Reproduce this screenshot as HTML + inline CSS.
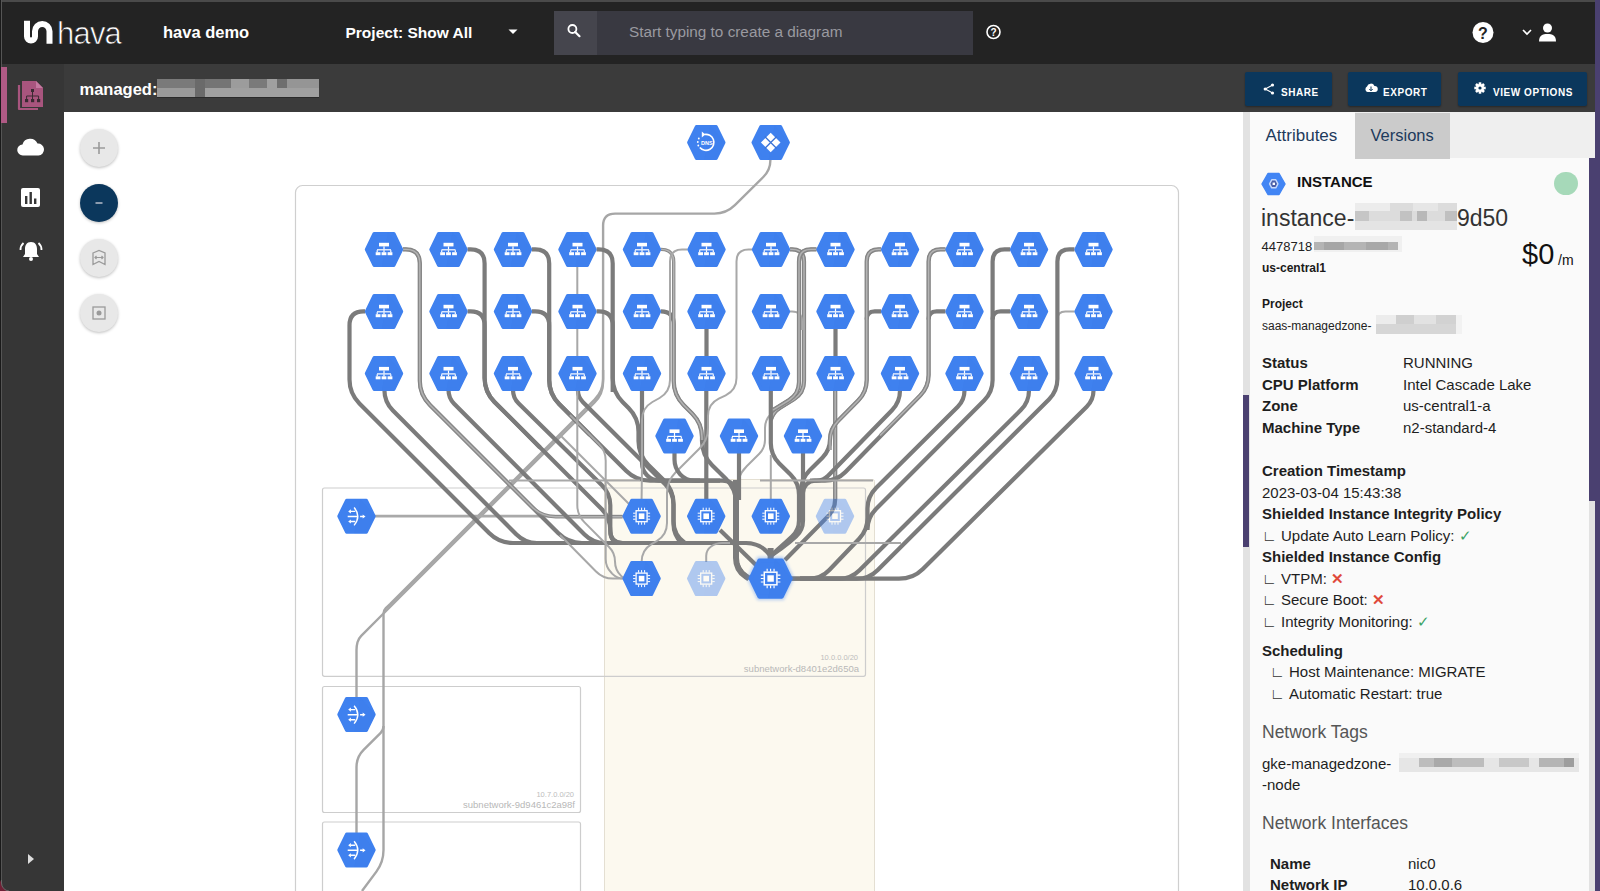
<!DOCTYPE html>
<html><head><meta charset="utf-8">
<style>
*{margin:0;padding:0;box-sizing:border-box}
html,body{width:1600px;height:891px;overflow:hidden;background:#fff;font-family:"Liberation Sans",sans-serif}
.abs{position:absolute}
#hdr{left:0;top:0;width:1600px;height:64px;background:#232323}
#topline{left:0;top:0;width:1600px;height:1.5px;background:#4a4a4a}
#side{left:0;top:64px;width:64px;height:827px;background:#363636}
#sub{left:64px;top:64px;width:1536px;height:48px;background:#3b3b3b}
#canvas{left:64px;top:112px;width:1179px;height:779px;background:#fff}
#panel{left:1250px;top:112px;width:339px;height:779px;background:#fafafa}
.t{position:absolute;white-space:nowrap;line-height:1}
.btn{position:absolute;top:72px;height:34px;background:#0b375c;border-radius:2px;box-shadow:0 1px 2px rgba(0,0,0,.35)}
.btn span{position:absolute;top:15.5px;font-size:10px;font-weight:bold;color:#fff;letter-spacing:0.55px;line-height:1}
.zc{position:absolute;left:80px;width:38px;height:38px;border-radius:50%;background:#e8e8e8;box-shadow:0 1px 3px rgba(0,0,0,.25)}
.pk b{font-weight:bold}
.row{position:absolute;left:1262px;font-size:15px;color:#1e1e1e;line-height:1;white-space:nowrap}
.row b{font-weight:bold}
.val{position:absolute;left:1403px}
</style></head><body>
<div id="hdr" class="abs"></div>
<div id="topline" class="abs"></div>
<div id="side" class="abs"></div>
<div id="sub" class="abs"></div>
<div id="canvas" class="abs"></div>
<div id="panel" class="abs"></div>




<!-- DIAGRAM START -->
<svg class="abs" style="left:0;top:0" width="1243" height="891" viewBox="0 0 1243 891">
<defs><filter id="blur" x="-50%" y="-50%" width="200%" height="200%"><feGaussianBlur stdDeviation="1.5"/></filter></defs>
<rect x="295.5" y="185.5" width="883" height="800" rx="7" fill="none" stroke="#cfcfcf" stroke-width="1.2"/>
<rect x="604.5" y="479.5" width="270" height="500" rx="2" fill="#fcf9ef" stroke="#e4dfd2" stroke-width="1"/>
<rect x="322.5" y="488" width="543" height="188.3" rx="2" fill="none" stroke="#cdcdcd" stroke-width="1.2"/>
<rect x="322.5" y="686.5" width="258" height="126" rx="2" fill="none" stroke="#cdcdcd" stroke-width="1.2"/>
<rect x="322.5" y="822" width="258" height="200" rx="2" fill="none" stroke="#cdcdcd" stroke-width="1.2"/>
<text x="858" y="660" font-size="7.5" fill="#bdbdbd" text-anchor="end" font-family="Liberation Sans">10.0.0.0/20</text>
<text x="859" y="671.5" font-size="9.5" fill="#b8b8b8" text-anchor="end" font-family="Liberation Sans">subnetwork-d8401e2d650a</text>
<text x="574" y="797" font-size="7.5" fill="#bdbdbd" text-anchor="end" font-family="Liberation Sans">10.7.0.0/20</text>
<text x="575" y="808" font-size="9.5" fill="#b8b8b8" text-anchor="end" font-family="Liberation Sans">subnetwork-9d9461c2a98f</text>
<path d="M770.4,160.0 L770.4,160.0 Q770.4,170.0 763.3,177.0 L734.9,205.2 Q726.4,213.6 714.4,213.6 L615.1,213.6 Q603.1,213.6 603.1,225.6 L603.1,379.0 Q603.1,391.0 594.6,399.5 L390.3,603.8 Q388.0,606.0 385.8,608.2 L385.8,608.2 Q383.5,610.5 383.5,613.7 L383.5,850.0 Q383.5,862.0 376.4,871.6 L362.0,891.0" fill="none" stroke="#a6a6a6" stroke-width="2.4"/>
<path d="M603.1,370.0 L603.1,382.0 Q603.1,394.0 594.6,402.5 L398.5,598.5 Q390.0,607.0 381.5,615.5 L361.2,635.8 Q358.5,638.5 357.5,642.2 L357.5,642.2 Q356.5,646.0 356.5,649.9 L356.5,697.0" fill="none" stroke="#a6a6a6" stroke-width="2.4"/>
<path d="M383.5,726.0 L383.5,726.0 Q383.5,730.0 380.7,732.8 L363.6,749.9 Q356.5,757.0 356.5,767.0 L356.5,833.0" fill="none" stroke="#a6a6a6" stroke-width="2.4"/>
<path d="M375.0,516.2 L622.6,516.2" fill="none" stroke="#a9a9a9" stroke-width="2.8"/>
<path d="M365.0,311.4 L363.5,311.4 Q349.5,311.4 349.5,325.4 L349.5,379.5 Q349.5,393.5 359.4,403.4 L489.1,533.1 Q499.0,543.0 513.0,543.0 L746.0,543.0 Q760.0,543.0 768.8,553.9 L770.6,556.0" fill="none" stroke="#7b7b7b" stroke-width="4.2"/>
<path d="M384.4,390.0 L384.4,390.0 Q384.4,402.0 392.9,410.5 L516.5,534.5 Q525.0,543.0 537.0,543.0 L600.0,543.0" fill="none" stroke="#7b7b7b" stroke-width="4.2"/>
<path d="M403.0,249.4 L405.8,249.4 Q419.8,249.4 419.8,263.4 L419.8,380.8 Q419.8,394.8 429.7,404.7 L558.1,533.1 Q568.0,543.0 582.0,543.0 L640.0,543.0" fill="none" stroke="#7b7b7b" stroke-width="4.2"/>
<path d="M403.0,249.4 L405.8,249.4 Q419.8,249.4 419.8,263.4 L419.8,380.8 Q419.8,394.8 429.7,404.7 L531.8,506.8 Q541.7,516.7 555.7,516.7 L622.6,516.7" fill="none" stroke="#8a8a8a" stroke-width="3.4"/><path d="M403.0,249.4 L405.8,249.4 Q419.8,249.4 419.8,263.4 L419.8,380.8 Q419.8,394.8 429.7,404.7 L531.8,506.8 Q541.7,516.7 555.7,516.7 L622.6,516.7" fill="none" stroke="#b4b4b4" stroke-width="1.4"/>
<path d="M560.0,535.0 L596.0,571.5 Q603.0,578.6 613.0,578.6 L622.6,578.6" fill="none" stroke="#a8a8a8" stroke-width="2"/>
<path d="M448.5,390.0 L448.5,390.0 Q448.5,398.0 454.1,403.7 L584.5,534.5 Q593.0,543.0 605.0,543.0 L660.0,543.0" fill="none" stroke="#7b7b7b" stroke-width="4.2"/>
<path d="M467.5,311.4 L470.6,311.4 Q484.6,311.4 484.6,325.4 L484.6,378.0 Q484.6,392.0 494.5,401.9 L601.4,508.8 Q610.3,517.7 610.3,530.4 L610.3,530.4 Q610.3,543.0 622.9,543.0 L680.0,543.0" fill="none" stroke="#7b7b7b" stroke-width="4.2"/>
<path d="M467.5,249.4 L470.6,249.4 Q484.6,249.4 484.6,263.4 L484.6,378.0 Q484.6,392.0 494.5,401.9 L540.0,447.4" fill="none" stroke="#7b7b7b" stroke-width="4.2"/>
<path d="M513.0,390.0 L513.0,390.0 Q513.0,398.0 518.7,403.6 L601.7,484.9 Q610.3,493.3 610.3,505.3 L610.3,531.0 Q610.3,543.0 622.3,543.0 L680.0,543.0" fill="none" stroke="#7b7b7b" stroke-width="4.2"/>
<path d="M532.0,311.4 L535.2,311.4 Q549.2,311.4 549.2,325.4 L549.2,380.0 Q549.2,394.0 559.1,403.9 L626.1,470.7 Q636.0,480.6 650.0,480.6 L722.0,480.6 Q736.0,480.6 736.0,494.6 L736.0,556.0 Q736.0,570.0 747.7,577.7 L749.0,578.5" fill="none" stroke="#7b7b7b" stroke-width="4.2"/>
<path d="M532.0,249.4 L535.2,249.4 Q549.2,249.4 549.2,263.4 L549.2,380.0 Q549.2,394.0 559.1,403.9 L590.0,435.0" fill="none" stroke="#7b7b7b" stroke-width="4.2"/>
<path d="M577.9,390.0 L577.9,390.0 Q577.9,397.0 582.8,401.9 L665.0,484.1 Q673.5,492.6 673.5,504.6 L673.5,523.7 Q673.5,535.0 681.5,543.0 L681.5,543.0" fill="none" stroke="#7b7b7b" stroke-width="4.2"/>
<path d="M596.5,311.4 L598.7,311.4 Q612.7,311.4 612.7,325.4 L612.7,378.0 Q612.7,392.0 622.6,401.9 L628.6,407.9 Q638.5,417.8 638.5,431.8 L638.5,441.0 Q638.5,455.0 648.4,464.9 L663.6,480.1 Q673.5,490.0 673.5,504.0 L673.5,521.0 Q673.5,535.0 685.0,543.0 L685.0,543.0" fill="none" stroke="#7b7b7b" stroke-width="4.2"/>
<path d="M596.5,249.4 L598.7,249.4 Q612.7,249.4 612.7,263.4 L612.7,392.0" fill="none" stroke="#7b7b7b" stroke-width="4.2"/>
<path d="M577.3,266.0 L577.3,505.0 Q577.3,515.0 584.3,522.1 L609.0,547.0 Q615.0,553.0 615.0,561.5 L615.0,561.5 Q615.0,570.0 621.1,575.9 L624.0,578.6" fill="none" stroke="#a8a8a8" stroke-width="2"/>
<path d="M570.0,415.0 L598.6,443.6 Q605.7,450.7 605.7,460.7 L605.7,558.9 Q605.7,567.0 611.4,572.8 L612.1,573.6 Q617.0,578.6 624.0,578.6 L624.0,578.6" fill="none" stroke="#a8a8a8" stroke-width="2"/>
<path d="M560.0,435.0 L631.0,506.0" fill="none" stroke="#a8a8a8" stroke-width="2"/>
<path d="M773.0,412.0 L770.7,414.3 Q765.0,420.0 765.0,428.0 L765.0,440.0 Q765.0,448.0 759.3,453.7 L746.7,466.3 Q741.0,472.0 738.2,479.5 L738.0,480.0" fill="none" stroke="#a8a8a8" stroke-width="2"/>
<path d="M642.0,390.0 L642.0,462.7 Q642.0,470.0 647.0,475.3 L647.0,475.3 Q652.0,480.6 659.3,480.6 L700.0,480.6" fill="none" stroke="#7b7b7b" stroke-width="4.2"/>
<path d="M661.0,311.4 L661.0,311.4 Q673.7,311.4 673.7,324.1 L673.7,381.0 Q673.7,395.0 683.6,404.9 L692.1,413.4 Q702.0,423.3 702.0,437.3 L702.0,441.0 Q702.0,455.0 711.9,464.9 L726.1,479.1 Q736.0,489.0 736.0,503.0 L736.0,556.0 Q736.0,570.0 747.7,577.7 L749.0,578.5" fill="none" stroke="#7b7b7b" stroke-width="4.2"/>
<path d="M661.0,249.4 L661.0,249.4 Q673.7,249.4 673.7,262.1 L673.7,381.0 Q673.7,395.0 683.6,404.9 L692.1,413.4 Q702.0,423.3 702.0,437.3 L702.0,440.0" fill="none" stroke="#8a8a8a" stroke-width="3.4"/><path d="M661.0,249.4 L661.0,249.4 Q673.7,249.4 673.7,262.1 L673.7,381.0 Q673.7,395.0 683.6,404.9 L692.1,413.4 Q702.0,423.3 702.0,437.3 L702.0,440.0" fill="none" stroke="#b4b4b4" stroke-width="1.4"/>
<path d="M687.5,249.4 L682.0,249.4 Q670.0,249.4 670.0,261.4 L670.0,380.0 Q670.0,392.0 659.6,398.0 L652.4,402.0 Q642.0,408.0 642.0,420.0 L642.0,458.0 Q642.0,470.0 641.8,482.0 L641.6,499.0" fill="none" stroke="#a8a8a8" stroke-width="2"/>
<path d="M706.5,328.4 L706.5,356.5" fill="none" stroke="#7b7b7b" stroke-width="4.2"/>
<path d="M706.3,390.5 L706.3,499.0" fill="none" stroke="#7b7b7b" stroke-width="4.2"/>
<path d="M752.0,249.4 L748.5,249.4 Q736.5,249.4 736.5,261.4 L736.5,378.0 Q736.5,390.0 725.7,395.3 L718.8,398.7 Q708.0,404.0 708.0,416.0 L708.0,428.0 Q708.0,440.0 699.5,448.5 L675.5,472.5 Q667.0,481.0 667.0,493.0 L667.0,523.0 Q667.0,535.0 656.7,541.1 L651.9,543.9 Q641.6,550.0 641.6,562.0 L641.6,562.0" fill="none" stroke="#a8a8a8" stroke-width="2"/>
<path d="M790.0,249.4 L792.0,249.4 Q804.0,249.4 804.0,261.4 L804.0,381.0 Q804.0,393.0 793.8,399.3 L780.1,407.7 Q773.0,412.0 770.8,420.0 L770.8,420.0" fill="none" stroke="#7b7b7b" stroke-width="4.2"/>
<path d="M790.0,249.4 L792.0,249.4 Q804.0,249.4 804.0,261.4 L804.0,381.0 Q804.0,393.0 793.8,399.3 L780.1,407.7 Q773.0,412.0 770.8,420.0 L770.8,420.0" fill="none" stroke="#8a8a8a" stroke-width="3.4"/><path d="M790.0,249.4 L792.0,249.4 Q804.0,249.4 804.0,261.4 L804.0,381.0 Q804.0,393.0 793.8,399.3 L780.1,407.7 Q773.0,412.0 770.8,420.0 L770.8,420.0" fill="none" stroke="#b4b4b4" stroke-width="1.4"/>
<path d="M790.0,311.4 L792.0,311.4 Q802.0,311.4 802.0,321.4 L802.0,330.0" fill="none" stroke="#a8a8a8" stroke-width="2"/>
<path d="M770.8,390.5 L770.8,443.0 Q770.8,455.0 779.3,463.5 L790.5,474.5 Q799.0,483.0 799.0,495.0 L799.0,520.4 Q799.0,530.0 792.0,536.5 L792.0,536.5 Q785.0,543.0 777.9,549.4 L770.6,556.0" fill="none" stroke="#7b7b7b" stroke-width="4.2"/>
<path d="M770.8,455.0 L770.8,499.0" fill="none" stroke="#a8a8a8" stroke-width="2"/>
<path d="M816.5,249.4 L811.0,249.4 Q799.0,249.4 799.0,261.4 L799.0,382.0 Q799.0,394.0 788.8,400.3 L773.0,410.0" fill="none" stroke="#7b7b7b" stroke-width="4.2"/>
<path d="M816.5,249.4 L811.0,249.4 Q799.0,249.4 799.0,261.4 L799.0,382.0 Q799.0,394.0 788.8,400.3 L773.0,410.0" fill="none" stroke="#8a8a8a" stroke-width="3.4"/><path d="M816.5,249.4 L811.0,249.4 Q799.0,249.4 799.0,261.4 L799.0,382.0 Q799.0,394.0 788.8,400.3 L773.0,410.0" fill="none" stroke="#b4b4b4" stroke-width="1.4"/>
<path d="M835.5,328.4 L835.5,356.5" fill="none" stroke="#7b7b7b" stroke-width="4.2"/>
<path d="M835.2,390.5 L835.2,499.0 Q835.2,509.0 828.2,516.1 L785.0,560.0" fill="none" stroke="#7b7b7b" stroke-width="4.2"/>
<path d="M835.2,390.5 L835.2,499.0" fill="none" stroke="#8a8a8a" stroke-width="3.4"/><path d="M835.2,390.5 L835.2,499.0" fill="none" stroke="#b4b4b4" stroke-width="1.4"/>
<path d="M881.0,311.4 L874.7,311.4 Q866.7,311.4 866.7,319.4 L866.7,319.4" fill="none" stroke="#7b7b7b" stroke-width="4.2"/>
<path d="M881.0,249.4 L878.7,249.4 Q866.7,249.4 866.7,261.4 L866.7,380.0 Q866.7,392.0 858.2,400.5 L837.4,421.5 Q830.0,429.0 830.0,439.5 L830.0,439.5 Q830.0,450.0 822.6,457.4 L809.5,470.5 Q801.0,479.0 801.0,491.0 L801.0,520.0" fill="none" stroke="#7b7b7b" stroke-width="4.2"/>
<path d="M881.0,249.4 L878.7,249.4 Q866.7,249.4 866.7,261.4 L866.7,380.0 Q866.7,392.0 858.2,400.5 L838.5,420.5 Q830.0,429.0 830.0,441.0 L830.0,450.0" fill="none" stroke="#8a8a8a" stroke-width="3.4"/><path d="M881.0,249.4 L878.7,249.4 Q866.7,249.4 866.7,261.4 L866.7,380.0 Q866.7,392.0 858.2,400.5 L838.5,420.5 Q830.0,429.0 830.0,441.0 L830.0,450.0" fill="none" stroke="#b4b4b4" stroke-width="1.4"/>
<path d="M900.0,390.5 L900.0,390.5 Q900.0,402.0 892.0,410.2 L828.1,475.8 Q823.4,480.6 816.7,480.6 L815.1,480.6 Q810.0,480.6 806.5,484.3 L806.5,484.3 Q803.0,488.0 803.0,493.1 L803.0,520.4 Q803.0,530.0 796.0,536.5 L796.0,536.5 Q789.0,543.0 781.2,548.5 L770.6,556.0" fill="none" stroke="#7b7b7b" stroke-width="4.2"/>
<path d="M803.0,453.0 L803.0,500.0" fill="none" stroke="#7b7b7b" stroke-width="4.2"/>
<path d="M739.0,453.0 L739.0,500.0" fill="none" stroke="#7b7b7b" stroke-width="4.2"/>
<path d="M674.5,453.0 L674.5,459.5 Q674.5,468.0 680.2,474.3 L680.2,474.3 Q686.0,480.6 694.5,480.6 L720.0,480.6" fill="none" stroke="#7b7b7b" stroke-width="4.2"/>
<path d="M945.5,311.4 L936.6,311.4 Q928.6,311.4 928.6,319.4 L928.6,319.4" fill="none" stroke="#7b7b7b" stroke-width="4.2"/>
<path d="M945.5,249.4 L940.6,249.4 Q928.6,249.4 928.6,261.4 L928.6,375.0 Q928.6,387.0 920.2,395.6 L845.4,472.0 Q837.0,480.6 825.0,480.6 L810.0,480.6" fill="none" stroke="#7b7b7b" stroke-width="4.2"/>
<path d="M945.5,249.4 L940.6,249.4 Q928.6,249.4 928.6,261.4 L928.6,375.0 Q928.6,387.0 920.1,395.5 L880.0,435.6" fill="none" stroke="#8a8a8a" stroke-width="3.4"/><path d="M945.5,249.4 L940.6,249.4 Q928.6,249.4 928.6,261.4 L928.6,375.0 Q928.6,387.0 920.1,395.5 L880.0,435.6" fill="none" stroke="#b4b4b4" stroke-width="1.4"/>
<path d="M964.5,390.5 L964.5,390.5 Q964.5,400.0 957.8,406.7 L876.0,488.0 Q867.5,496.5 867.5,508.5 L867.5,518.0 Q867.5,530.0 859.2,538.7 L829.3,570.0 Q821.0,578.7 809.0,578.7 L790.0,578.7" fill="none" stroke="#7b7b7b" stroke-width="4.2"/>
<path d="M1010.0,311.4 L1000.6,311.4 Q992.6,311.4 992.6,319.4 L992.6,319.4" fill="none" stroke="#7b7b7b" stroke-width="4.2"/>
<path d="M1010.0,249.4 L1004.6,249.4 Q992.6,249.4 992.6,261.4 L992.6,380.0 Q992.6,392.0 984.1,400.5 L876.0,509.0 Q867.5,517.5 867.5,529.5 L867.5,530.0" fill="none" stroke="#7b7b7b" stroke-width="4.2"/>
<path d="M1029.0,390.5 L1029.0,390.5 Q1029.0,402.0 1020.8,410.1 L859.5,570.2 Q851.0,578.7 839.0,578.7 L800.0,578.7" fill="none" stroke="#7b7b7b" stroke-width="4.2"/>
<path d="M1074.5,311.4 L1065.4,311.4 Q1057.4,311.4 1057.4,319.4 L1057.4,319.4" fill="none" stroke="#a8a8a8" stroke-width="2"/>
<path d="M1074.5,249.4 L1069.4,249.4 Q1057.4,249.4 1057.4,261.4 L1057.4,379.0 Q1057.4,391.0 1048.9,399.5 L877.5,570.2 Q869.0,578.7 857.0,578.7 L800.0,578.7" fill="none" stroke="#7b7b7b" stroke-width="4.2"/>
<path d="M1093.5,390.5 L1093.5,390.5 Q1093.5,400.0 1086.7,406.7 L922.9,568.9 Q913.0,578.7 899.0,578.7 L790.0,578.7" fill="none" stroke="#7b7b7b" stroke-width="4.2"/>
<path d="M720.0,530.0 L757.0,566.0" fill="none" stroke="#7b7b7b" stroke-width="4.2"/>
<path d="M736.0,480.0 L736.0,558.0 Q736.0,570.0 746.0,576.6 L749.0,578.5" fill="none" stroke="#7b7b7b" stroke-width="6"/>
<path d="M770.6,548.0 L770.6,560.0" fill="none" stroke="#7b7b7b" stroke-width="6"/>
<path d="M706.2,562.0 L706.2,556.0 Q706.2,550.0 711.1,546.5 L711.1,546.5 Q716.0,543.0 722.0,543.0 L730.0,543.0" fill="none" stroke="#a8a8a8" stroke-width="2"/>
<path d="M795.0,543.0 L901.0,543.0" fill="none" stroke="#a8a8a8" stroke-width="2"/>
<path d="M509.0,480.6 L640.0,480.6" fill="none" stroke="#a8a8a8" stroke-width="2"/>
<path d="M760.0,480.6 L873.0,480.6" fill="none" stroke="#a8a8a8" stroke-width="2"/>
<g transform="translate(706.3,142.5) scale(1.0)" opacity="1.0"><path d="M-17.5,0.0 L-9.8,-15.8 L9.8,-15.8 L17.5,0.0 L9.8,15.8 L-9.8,15.8 Z" fill="#3f81ef" stroke="#3f81ef" stroke-width="3.4" stroke-linejoin="round"/><path d="M4,-17 L18.5,0 L10,17 L-2,17 Z" fill="#3b7be8" opacity="0.25"/><g fill="none" stroke="#fff" stroke-width="1.6"><path d="M-2,-8 A8,8 0 1 1 -6.5,5"/></g><path d="M-4.5,-11 L-1,-8 L-4.5,-5 Z" fill="#fff"/><g fill="#fff"><circle cx="-7.5" cy="-4" r="0.9"/><circle cx="-8.5" cy="-0.5" r="0.9"/><circle cx="-8" cy="3" r="0.9"/></g><text x="0.5" y="2.3" font-size="5.5" font-weight="bold" fill="#fff" text-anchor="middle" font-family="Liberation Sans">DNS</text></g>
<g transform="translate(770.7,142.5) scale(1.0)" opacity="1.0"><path d="M-17.5,0.0 L-9.8,-15.8 L9.8,-15.8 L17.5,0.0 L9.8,15.8 L-9.8,15.8 Z" fill="#3f81ef" stroke="#3f81ef" stroke-width="3.4" stroke-linejoin="round"/><path d="M4,-17 L18.5,0 L10,17 L-2,17 Z" fill="#3b7be8" opacity="0.25"/><g fill="#fff"><path d="M0,-9.8 L5,-4.8 L0,0.2 L-5,-4.8 Z"/><path d="M0,9.8 L5,4.8 L0,-0.2 L-5,4.8 Z"/><path d="M-9.8,0 L-4.8,5 L0.2,0 L-4.8,-5 Z"/><path d="M9.8,0 L4.8,5 L-0.2,0 L4.8,-5 Z"/></g><path d="M-6,-6 L6,6 M6,-6 L-6,6" stroke="#3b73d6" stroke-width="1.3"/></g>
<g transform="translate(384.0,249.4) scale(1.0)" opacity="1.0"><path d="M-17.5,0.0 L-9.8,-15.8 L9.8,-15.8 L17.5,0.0 L9.8,15.8 L-9.8,15.8 Z" fill="#3f81ef" stroke="#3f81ef" stroke-width="3.4" stroke-linejoin="round"/><path d="M4,-17 L18.5,0 L10,17 L-2,17 Z" fill="#3b7be8" opacity="0.25"/><g fill="#fff"><rect x="-5" y="-6.6" width="10" height="3.6"/><rect x="-0.6" y="-3" width="1.2" height="3"/><rect x="-7" y="-0.2" width="14" height="1.2"/><rect x="-7.4" y="0.8" width="1.2" height="2"/><rect x="-0.6" y="0.8" width="1.2" height="2"/><rect x="6.2" y="0.8" width="1.2" height="2"/><rect x="-8.3" y="2.8" width="4.8" height="3"/><rect x="-2.4" y="2.8" width="4.8" height="3"/><rect x="3.6" y="2.8" width="4.8" height="3"/></g></g>
<g transform="translate(384.0,311.4) scale(1.0)" opacity="1.0"><path d="M-17.5,0.0 L-9.8,-15.8 L9.8,-15.8 L17.5,0.0 L9.8,15.8 L-9.8,15.8 Z" fill="#3f81ef" stroke="#3f81ef" stroke-width="3.4" stroke-linejoin="round"/><path d="M4,-17 L18.5,0 L10,17 L-2,17 Z" fill="#3b7be8" opacity="0.25"/><g fill="#fff"><rect x="-5" y="-6.6" width="10" height="3.6"/><rect x="-0.6" y="-3" width="1.2" height="3"/><rect x="-7" y="-0.2" width="14" height="1.2"/><rect x="-7.4" y="0.8" width="1.2" height="2"/><rect x="-0.6" y="0.8" width="1.2" height="2"/><rect x="6.2" y="0.8" width="1.2" height="2"/><rect x="-8.3" y="2.8" width="4.8" height="3"/><rect x="-2.4" y="2.8" width="4.8" height="3"/><rect x="3.6" y="2.8" width="4.8" height="3"/></g></g>
<g transform="translate(384.0,373.5) scale(1.0)" opacity="1.0"><path d="M-17.5,0.0 L-9.8,-15.8 L9.8,-15.8 L17.5,0.0 L9.8,15.8 L-9.8,15.8 Z" fill="#3f81ef" stroke="#3f81ef" stroke-width="3.4" stroke-linejoin="round"/><path d="M4,-17 L18.5,0 L10,17 L-2,17 Z" fill="#3b7be8" opacity="0.25"/><g fill="#fff"><rect x="-5" y="-6.6" width="10" height="3.6"/><rect x="-0.6" y="-3" width="1.2" height="3"/><rect x="-7" y="-0.2" width="14" height="1.2"/><rect x="-7.4" y="0.8" width="1.2" height="2"/><rect x="-0.6" y="0.8" width="1.2" height="2"/><rect x="6.2" y="0.8" width="1.2" height="2"/><rect x="-8.3" y="2.8" width="4.8" height="3"/><rect x="-2.4" y="2.8" width="4.8" height="3"/><rect x="3.6" y="2.8" width="4.8" height="3"/></g></g>
<g transform="translate(448.5,249.4) scale(1.0)" opacity="1.0"><path d="M-17.5,0.0 L-9.8,-15.8 L9.8,-15.8 L17.5,0.0 L9.8,15.8 L-9.8,15.8 Z" fill="#3f81ef" stroke="#3f81ef" stroke-width="3.4" stroke-linejoin="round"/><path d="M4,-17 L18.5,0 L10,17 L-2,17 Z" fill="#3b7be8" opacity="0.25"/><g fill="#fff"><rect x="-5" y="-6.6" width="10" height="3.6"/><rect x="-0.6" y="-3" width="1.2" height="3"/><rect x="-7" y="-0.2" width="14" height="1.2"/><rect x="-7.4" y="0.8" width="1.2" height="2"/><rect x="-0.6" y="0.8" width="1.2" height="2"/><rect x="6.2" y="0.8" width="1.2" height="2"/><rect x="-8.3" y="2.8" width="4.8" height="3"/><rect x="-2.4" y="2.8" width="4.8" height="3"/><rect x="3.6" y="2.8" width="4.8" height="3"/></g></g>
<g transform="translate(448.5,311.4) scale(1.0)" opacity="1.0"><path d="M-17.5,0.0 L-9.8,-15.8 L9.8,-15.8 L17.5,0.0 L9.8,15.8 L-9.8,15.8 Z" fill="#3f81ef" stroke="#3f81ef" stroke-width="3.4" stroke-linejoin="round"/><path d="M4,-17 L18.5,0 L10,17 L-2,17 Z" fill="#3b7be8" opacity="0.25"/><g fill="#fff"><rect x="-5" y="-6.6" width="10" height="3.6"/><rect x="-0.6" y="-3" width="1.2" height="3"/><rect x="-7" y="-0.2" width="14" height="1.2"/><rect x="-7.4" y="0.8" width="1.2" height="2"/><rect x="-0.6" y="0.8" width="1.2" height="2"/><rect x="6.2" y="0.8" width="1.2" height="2"/><rect x="-8.3" y="2.8" width="4.8" height="3"/><rect x="-2.4" y="2.8" width="4.8" height="3"/><rect x="3.6" y="2.8" width="4.8" height="3"/></g></g>
<g transform="translate(448.5,373.5) scale(1.0)" opacity="1.0"><path d="M-17.5,0.0 L-9.8,-15.8 L9.8,-15.8 L17.5,0.0 L9.8,15.8 L-9.8,15.8 Z" fill="#3f81ef" stroke="#3f81ef" stroke-width="3.4" stroke-linejoin="round"/><path d="M4,-17 L18.5,0 L10,17 L-2,17 Z" fill="#3b7be8" opacity="0.25"/><g fill="#fff"><rect x="-5" y="-6.6" width="10" height="3.6"/><rect x="-0.6" y="-3" width="1.2" height="3"/><rect x="-7" y="-0.2" width="14" height="1.2"/><rect x="-7.4" y="0.8" width="1.2" height="2"/><rect x="-0.6" y="0.8" width="1.2" height="2"/><rect x="6.2" y="0.8" width="1.2" height="2"/><rect x="-8.3" y="2.8" width="4.8" height="3"/><rect x="-2.4" y="2.8" width="4.8" height="3"/><rect x="3.6" y="2.8" width="4.8" height="3"/></g></g>
<g transform="translate(513.0,249.4) scale(1.0)" opacity="1.0"><path d="M-17.5,0.0 L-9.8,-15.8 L9.8,-15.8 L17.5,0.0 L9.8,15.8 L-9.8,15.8 Z" fill="#3f81ef" stroke="#3f81ef" stroke-width="3.4" stroke-linejoin="round"/><path d="M4,-17 L18.5,0 L10,17 L-2,17 Z" fill="#3b7be8" opacity="0.25"/><g fill="#fff"><rect x="-5" y="-6.6" width="10" height="3.6"/><rect x="-0.6" y="-3" width="1.2" height="3"/><rect x="-7" y="-0.2" width="14" height="1.2"/><rect x="-7.4" y="0.8" width="1.2" height="2"/><rect x="-0.6" y="0.8" width="1.2" height="2"/><rect x="6.2" y="0.8" width="1.2" height="2"/><rect x="-8.3" y="2.8" width="4.8" height="3"/><rect x="-2.4" y="2.8" width="4.8" height="3"/><rect x="3.6" y="2.8" width="4.8" height="3"/></g></g>
<g transform="translate(513.0,311.4) scale(1.0)" opacity="1.0"><path d="M-17.5,0.0 L-9.8,-15.8 L9.8,-15.8 L17.5,0.0 L9.8,15.8 L-9.8,15.8 Z" fill="#3f81ef" stroke="#3f81ef" stroke-width="3.4" stroke-linejoin="round"/><path d="M4,-17 L18.5,0 L10,17 L-2,17 Z" fill="#3b7be8" opacity="0.25"/><g fill="#fff"><rect x="-5" y="-6.6" width="10" height="3.6"/><rect x="-0.6" y="-3" width="1.2" height="3"/><rect x="-7" y="-0.2" width="14" height="1.2"/><rect x="-7.4" y="0.8" width="1.2" height="2"/><rect x="-0.6" y="0.8" width="1.2" height="2"/><rect x="6.2" y="0.8" width="1.2" height="2"/><rect x="-8.3" y="2.8" width="4.8" height="3"/><rect x="-2.4" y="2.8" width="4.8" height="3"/><rect x="3.6" y="2.8" width="4.8" height="3"/></g></g>
<g transform="translate(513.0,373.5) scale(1.0)" opacity="1.0"><path d="M-17.5,0.0 L-9.8,-15.8 L9.8,-15.8 L17.5,0.0 L9.8,15.8 L-9.8,15.8 Z" fill="#3f81ef" stroke="#3f81ef" stroke-width="3.4" stroke-linejoin="round"/><path d="M4,-17 L18.5,0 L10,17 L-2,17 Z" fill="#3b7be8" opacity="0.25"/><g fill="#fff"><rect x="-5" y="-6.6" width="10" height="3.6"/><rect x="-0.6" y="-3" width="1.2" height="3"/><rect x="-7" y="-0.2" width="14" height="1.2"/><rect x="-7.4" y="0.8" width="1.2" height="2"/><rect x="-0.6" y="0.8" width="1.2" height="2"/><rect x="6.2" y="0.8" width="1.2" height="2"/><rect x="-8.3" y="2.8" width="4.8" height="3"/><rect x="-2.4" y="2.8" width="4.8" height="3"/><rect x="3.6" y="2.8" width="4.8" height="3"/></g></g>
<g transform="translate(577.5,249.4) scale(1.0)" opacity="1.0"><path d="M-17.5,0.0 L-9.8,-15.8 L9.8,-15.8 L17.5,0.0 L9.8,15.8 L-9.8,15.8 Z" fill="#3f81ef" stroke="#3f81ef" stroke-width="3.4" stroke-linejoin="round"/><path d="M4,-17 L18.5,0 L10,17 L-2,17 Z" fill="#3b7be8" opacity="0.25"/><g fill="#fff"><rect x="-5" y="-6.6" width="10" height="3.6"/><rect x="-0.6" y="-3" width="1.2" height="3"/><rect x="-7" y="-0.2" width="14" height="1.2"/><rect x="-7.4" y="0.8" width="1.2" height="2"/><rect x="-0.6" y="0.8" width="1.2" height="2"/><rect x="6.2" y="0.8" width="1.2" height="2"/><rect x="-8.3" y="2.8" width="4.8" height="3"/><rect x="-2.4" y="2.8" width="4.8" height="3"/><rect x="3.6" y="2.8" width="4.8" height="3"/></g></g>
<g transform="translate(577.5,311.4) scale(1.0)" opacity="1.0"><path d="M-17.5,0.0 L-9.8,-15.8 L9.8,-15.8 L17.5,0.0 L9.8,15.8 L-9.8,15.8 Z" fill="#3f81ef" stroke="#3f81ef" stroke-width="3.4" stroke-linejoin="round"/><path d="M4,-17 L18.5,0 L10,17 L-2,17 Z" fill="#3b7be8" opacity="0.25"/><g fill="#fff"><rect x="-5" y="-6.6" width="10" height="3.6"/><rect x="-0.6" y="-3" width="1.2" height="3"/><rect x="-7" y="-0.2" width="14" height="1.2"/><rect x="-7.4" y="0.8" width="1.2" height="2"/><rect x="-0.6" y="0.8" width="1.2" height="2"/><rect x="6.2" y="0.8" width="1.2" height="2"/><rect x="-8.3" y="2.8" width="4.8" height="3"/><rect x="-2.4" y="2.8" width="4.8" height="3"/><rect x="3.6" y="2.8" width="4.8" height="3"/></g></g>
<g transform="translate(577.5,373.5) scale(1.0)" opacity="1.0"><path d="M-17.5,0.0 L-9.8,-15.8 L9.8,-15.8 L17.5,0.0 L9.8,15.8 L-9.8,15.8 Z" fill="#3f81ef" stroke="#3f81ef" stroke-width="3.4" stroke-linejoin="round"/><path d="M4,-17 L18.5,0 L10,17 L-2,17 Z" fill="#3b7be8" opacity="0.25"/><g fill="#fff"><rect x="-5" y="-6.6" width="10" height="3.6"/><rect x="-0.6" y="-3" width="1.2" height="3"/><rect x="-7" y="-0.2" width="14" height="1.2"/><rect x="-7.4" y="0.8" width="1.2" height="2"/><rect x="-0.6" y="0.8" width="1.2" height="2"/><rect x="6.2" y="0.8" width="1.2" height="2"/><rect x="-8.3" y="2.8" width="4.8" height="3"/><rect x="-2.4" y="2.8" width="4.8" height="3"/><rect x="3.6" y="2.8" width="4.8" height="3"/></g></g>
<g transform="translate(642.0,249.4) scale(1.0)" opacity="1.0"><path d="M-17.5,0.0 L-9.8,-15.8 L9.8,-15.8 L17.5,0.0 L9.8,15.8 L-9.8,15.8 Z" fill="#3f81ef" stroke="#3f81ef" stroke-width="3.4" stroke-linejoin="round"/><path d="M4,-17 L18.5,0 L10,17 L-2,17 Z" fill="#3b7be8" opacity="0.25"/><g fill="#fff"><rect x="-5" y="-6.6" width="10" height="3.6"/><rect x="-0.6" y="-3" width="1.2" height="3"/><rect x="-7" y="-0.2" width="14" height="1.2"/><rect x="-7.4" y="0.8" width="1.2" height="2"/><rect x="-0.6" y="0.8" width="1.2" height="2"/><rect x="6.2" y="0.8" width="1.2" height="2"/><rect x="-8.3" y="2.8" width="4.8" height="3"/><rect x="-2.4" y="2.8" width="4.8" height="3"/><rect x="3.6" y="2.8" width="4.8" height="3"/></g></g>
<g transform="translate(642.0,311.4) scale(1.0)" opacity="1.0"><path d="M-17.5,0.0 L-9.8,-15.8 L9.8,-15.8 L17.5,0.0 L9.8,15.8 L-9.8,15.8 Z" fill="#3f81ef" stroke="#3f81ef" stroke-width="3.4" stroke-linejoin="round"/><path d="M4,-17 L18.5,0 L10,17 L-2,17 Z" fill="#3b7be8" opacity="0.25"/><g fill="#fff"><rect x="-5" y="-6.6" width="10" height="3.6"/><rect x="-0.6" y="-3" width="1.2" height="3"/><rect x="-7" y="-0.2" width="14" height="1.2"/><rect x="-7.4" y="0.8" width="1.2" height="2"/><rect x="-0.6" y="0.8" width="1.2" height="2"/><rect x="6.2" y="0.8" width="1.2" height="2"/><rect x="-8.3" y="2.8" width="4.8" height="3"/><rect x="-2.4" y="2.8" width="4.8" height="3"/><rect x="3.6" y="2.8" width="4.8" height="3"/></g></g>
<g transform="translate(642.0,373.5) scale(1.0)" opacity="1.0"><path d="M-17.5,0.0 L-9.8,-15.8 L9.8,-15.8 L17.5,0.0 L9.8,15.8 L-9.8,15.8 Z" fill="#3f81ef" stroke="#3f81ef" stroke-width="3.4" stroke-linejoin="round"/><path d="M4,-17 L18.5,0 L10,17 L-2,17 Z" fill="#3b7be8" opacity="0.25"/><g fill="#fff"><rect x="-5" y="-6.6" width="10" height="3.6"/><rect x="-0.6" y="-3" width="1.2" height="3"/><rect x="-7" y="-0.2" width="14" height="1.2"/><rect x="-7.4" y="0.8" width="1.2" height="2"/><rect x="-0.6" y="0.8" width="1.2" height="2"/><rect x="6.2" y="0.8" width="1.2" height="2"/><rect x="-8.3" y="2.8" width="4.8" height="3"/><rect x="-2.4" y="2.8" width="4.8" height="3"/><rect x="3.6" y="2.8" width="4.8" height="3"/></g></g>
<g transform="translate(706.5,249.4) scale(1.0)" opacity="1.0"><path d="M-17.5,0.0 L-9.8,-15.8 L9.8,-15.8 L17.5,0.0 L9.8,15.8 L-9.8,15.8 Z" fill="#3f81ef" stroke="#3f81ef" stroke-width="3.4" stroke-linejoin="round"/><path d="M4,-17 L18.5,0 L10,17 L-2,17 Z" fill="#3b7be8" opacity="0.25"/><g fill="#fff"><rect x="-5" y="-6.6" width="10" height="3.6"/><rect x="-0.6" y="-3" width="1.2" height="3"/><rect x="-7" y="-0.2" width="14" height="1.2"/><rect x="-7.4" y="0.8" width="1.2" height="2"/><rect x="-0.6" y="0.8" width="1.2" height="2"/><rect x="6.2" y="0.8" width="1.2" height="2"/><rect x="-8.3" y="2.8" width="4.8" height="3"/><rect x="-2.4" y="2.8" width="4.8" height="3"/><rect x="3.6" y="2.8" width="4.8" height="3"/></g></g>
<g transform="translate(706.5,311.4) scale(1.0)" opacity="1.0"><path d="M-17.5,0.0 L-9.8,-15.8 L9.8,-15.8 L17.5,0.0 L9.8,15.8 L-9.8,15.8 Z" fill="#3f81ef" stroke="#3f81ef" stroke-width="3.4" stroke-linejoin="round"/><path d="M4,-17 L18.5,0 L10,17 L-2,17 Z" fill="#3b7be8" opacity="0.25"/><g fill="#fff"><rect x="-5" y="-6.6" width="10" height="3.6"/><rect x="-0.6" y="-3" width="1.2" height="3"/><rect x="-7" y="-0.2" width="14" height="1.2"/><rect x="-7.4" y="0.8" width="1.2" height="2"/><rect x="-0.6" y="0.8" width="1.2" height="2"/><rect x="6.2" y="0.8" width="1.2" height="2"/><rect x="-8.3" y="2.8" width="4.8" height="3"/><rect x="-2.4" y="2.8" width="4.8" height="3"/><rect x="3.6" y="2.8" width="4.8" height="3"/></g></g>
<g transform="translate(706.5,373.5) scale(1.0)" opacity="1.0"><path d="M-17.5,0.0 L-9.8,-15.8 L9.8,-15.8 L17.5,0.0 L9.8,15.8 L-9.8,15.8 Z" fill="#3f81ef" stroke="#3f81ef" stroke-width="3.4" stroke-linejoin="round"/><path d="M4,-17 L18.5,0 L10,17 L-2,17 Z" fill="#3b7be8" opacity="0.25"/><g fill="#fff"><rect x="-5" y="-6.6" width="10" height="3.6"/><rect x="-0.6" y="-3" width="1.2" height="3"/><rect x="-7" y="-0.2" width="14" height="1.2"/><rect x="-7.4" y="0.8" width="1.2" height="2"/><rect x="-0.6" y="0.8" width="1.2" height="2"/><rect x="6.2" y="0.8" width="1.2" height="2"/><rect x="-8.3" y="2.8" width="4.8" height="3"/><rect x="-2.4" y="2.8" width="4.8" height="3"/><rect x="3.6" y="2.8" width="4.8" height="3"/></g></g>
<g transform="translate(771.0,249.4) scale(1.0)" opacity="1.0"><path d="M-17.5,0.0 L-9.8,-15.8 L9.8,-15.8 L17.5,0.0 L9.8,15.8 L-9.8,15.8 Z" fill="#3f81ef" stroke="#3f81ef" stroke-width="3.4" stroke-linejoin="round"/><path d="M4,-17 L18.5,0 L10,17 L-2,17 Z" fill="#3b7be8" opacity="0.25"/><g fill="#fff"><rect x="-5" y="-6.6" width="10" height="3.6"/><rect x="-0.6" y="-3" width="1.2" height="3"/><rect x="-7" y="-0.2" width="14" height="1.2"/><rect x="-7.4" y="0.8" width="1.2" height="2"/><rect x="-0.6" y="0.8" width="1.2" height="2"/><rect x="6.2" y="0.8" width="1.2" height="2"/><rect x="-8.3" y="2.8" width="4.8" height="3"/><rect x="-2.4" y="2.8" width="4.8" height="3"/><rect x="3.6" y="2.8" width="4.8" height="3"/></g></g>
<g transform="translate(771.0,311.4) scale(1.0)" opacity="1.0"><path d="M-17.5,0.0 L-9.8,-15.8 L9.8,-15.8 L17.5,0.0 L9.8,15.8 L-9.8,15.8 Z" fill="#3f81ef" stroke="#3f81ef" stroke-width="3.4" stroke-linejoin="round"/><path d="M4,-17 L18.5,0 L10,17 L-2,17 Z" fill="#3b7be8" opacity="0.25"/><g fill="#fff"><rect x="-5" y="-6.6" width="10" height="3.6"/><rect x="-0.6" y="-3" width="1.2" height="3"/><rect x="-7" y="-0.2" width="14" height="1.2"/><rect x="-7.4" y="0.8" width="1.2" height="2"/><rect x="-0.6" y="0.8" width="1.2" height="2"/><rect x="6.2" y="0.8" width="1.2" height="2"/><rect x="-8.3" y="2.8" width="4.8" height="3"/><rect x="-2.4" y="2.8" width="4.8" height="3"/><rect x="3.6" y="2.8" width="4.8" height="3"/></g></g>
<g transform="translate(771.0,373.5) scale(1.0)" opacity="1.0"><path d="M-17.5,0.0 L-9.8,-15.8 L9.8,-15.8 L17.5,0.0 L9.8,15.8 L-9.8,15.8 Z" fill="#3f81ef" stroke="#3f81ef" stroke-width="3.4" stroke-linejoin="round"/><path d="M4,-17 L18.5,0 L10,17 L-2,17 Z" fill="#3b7be8" opacity="0.25"/><g fill="#fff"><rect x="-5" y="-6.6" width="10" height="3.6"/><rect x="-0.6" y="-3" width="1.2" height="3"/><rect x="-7" y="-0.2" width="14" height="1.2"/><rect x="-7.4" y="0.8" width="1.2" height="2"/><rect x="-0.6" y="0.8" width="1.2" height="2"/><rect x="6.2" y="0.8" width="1.2" height="2"/><rect x="-8.3" y="2.8" width="4.8" height="3"/><rect x="-2.4" y="2.8" width="4.8" height="3"/><rect x="3.6" y="2.8" width="4.8" height="3"/></g></g>
<g transform="translate(835.5,249.4) scale(1.0)" opacity="1.0"><path d="M-17.5,0.0 L-9.8,-15.8 L9.8,-15.8 L17.5,0.0 L9.8,15.8 L-9.8,15.8 Z" fill="#3f81ef" stroke="#3f81ef" stroke-width="3.4" stroke-linejoin="round"/><path d="M4,-17 L18.5,0 L10,17 L-2,17 Z" fill="#3b7be8" opacity="0.25"/><g fill="#fff"><rect x="-5" y="-6.6" width="10" height="3.6"/><rect x="-0.6" y="-3" width="1.2" height="3"/><rect x="-7" y="-0.2" width="14" height="1.2"/><rect x="-7.4" y="0.8" width="1.2" height="2"/><rect x="-0.6" y="0.8" width="1.2" height="2"/><rect x="6.2" y="0.8" width="1.2" height="2"/><rect x="-8.3" y="2.8" width="4.8" height="3"/><rect x="-2.4" y="2.8" width="4.8" height="3"/><rect x="3.6" y="2.8" width="4.8" height="3"/></g></g>
<g transform="translate(835.5,311.4) scale(1.0)" opacity="1.0"><path d="M-17.5,0.0 L-9.8,-15.8 L9.8,-15.8 L17.5,0.0 L9.8,15.8 L-9.8,15.8 Z" fill="#3f81ef" stroke="#3f81ef" stroke-width="3.4" stroke-linejoin="round"/><path d="M4,-17 L18.5,0 L10,17 L-2,17 Z" fill="#3b7be8" opacity="0.25"/><g fill="#fff"><rect x="-5" y="-6.6" width="10" height="3.6"/><rect x="-0.6" y="-3" width="1.2" height="3"/><rect x="-7" y="-0.2" width="14" height="1.2"/><rect x="-7.4" y="0.8" width="1.2" height="2"/><rect x="-0.6" y="0.8" width="1.2" height="2"/><rect x="6.2" y="0.8" width="1.2" height="2"/><rect x="-8.3" y="2.8" width="4.8" height="3"/><rect x="-2.4" y="2.8" width="4.8" height="3"/><rect x="3.6" y="2.8" width="4.8" height="3"/></g></g>
<g transform="translate(835.5,373.5) scale(1.0)" opacity="1.0"><path d="M-17.5,0.0 L-9.8,-15.8 L9.8,-15.8 L17.5,0.0 L9.8,15.8 L-9.8,15.8 Z" fill="#3f81ef" stroke="#3f81ef" stroke-width="3.4" stroke-linejoin="round"/><path d="M4,-17 L18.5,0 L10,17 L-2,17 Z" fill="#3b7be8" opacity="0.25"/><g fill="#fff"><rect x="-5" y="-6.6" width="10" height="3.6"/><rect x="-0.6" y="-3" width="1.2" height="3"/><rect x="-7" y="-0.2" width="14" height="1.2"/><rect x="-7.4" y="0.8" width="1.2" height="2"/><rect x="-0.6" y="0.8" width="1.2" height="2"/><rect x="6.2" y="0.8" width="1.2" height="2"/><rect x="-8.3" y="2.8" width="4.8" height="3"/><rect x="-2.4" y="2.8" width="4.8" height="3"/><rect x="3.6" y="2.8" width="4.8" height="3"/></g></g>
<g transform="translate(900.0,249.4) scale(1.0)" opacity="1.0"><path d="M-17.5,0.0 L-9.8,-15.8 L9.8,-15.8 L17.5,0.0 L9.8,15.8 L-9.8,15.8 Z" fill="#3f81ef" stroke="#3f81ef" stroke-width="3.4" stroke-linejoin="round"/><path d="M4,-17 L18.5,0 L10,17 L-2,17 Z" fill="#3b7be8" opacity="0.25"/><g fill="#fff"><rect x="-5" y="-6.6" width="10" height="3.6"/><rect x="-0.6" y="-3" width="1.2" height="3"/><rect x="-7" y="-0.2" width="14" height="1.2"/><rect x="-7.4" y="0.8" width="1.2" height="2"/><rect x="-0.6" y="0.8" width="1.2" height="2"/><rect x="6.2" y="0.8" width="1.2" height="2"/><rect x="-8.3" y="2.8" width="4.8" height="3"/><rect x="-2.4" y="2.8" width="4.8" height="3"/><rect x="3.6" y="2.8" width="4.8" height="3"/></g></g>
<g transform="translate(900.0,311.4) scale(1.0)" opacity="1.0"><path d="M-17.5,0.0 L-9.8,-15.8 L9.8,-15.8 L17.5,0.0 L9.8,15.8 L-9.8,15.8 Z" fill="#3f81ef" stroke="#3f81ef" stroke-width="3.4" stroke-linejoin="round"/><path d="M4,-17 L18.5,0 L10,17 L-2,17 Z" fill="#3b7be8" opacity="0.25"/><g fill="#fff"><rect x="-5" y="-6.6" width="10" height="3.6"/><rect x="-0.6" y="-3" width="1.2" height="3"/><rect x="-7" y="-0.2" width="14" height="1.2"/><rect x="-7.4" y="0.8" width="1.2" height="2"/><rect x="-0.6" y="0.8" width="1.2" height="2"/><rect x="6.2" y="0.8" width="1.2" height="2"/><rect x="-8.3" y="2.8" width="4.8" height="3"/><rect x="-2.4" y="2.8" width="4.8" height="3"/><rect x="3.6" y="2.8" width="4.8" height="3"/></g></g>
<g transform="translate(900.0,373.5) scale(1.0)" opacity="1.0"><path d="M-17.5,0.0 L-9.8,-15.8 L9.8,-15.8 L17.5,0.0 L9.8,15.8 L-9.8,15.8 Z" fill="#3f81ef" stroke="#3f81ef" stroke-width="3.4" stroke-linejoin="round"/><path d="M4,-17 L18.5,0 L10,17 L-2,17 Z" fill="#3b7be8" opacity="0.25"/><g fill="#fff"><rect x="-5" y="-6.6" width="10" height="3.6"/><rect x="-0.6" y="-3" width="1.2" height="3"/><rect x="-7" y="-0.2" width="14" height="1.2"/><rect x="-7.4" y="0.8" width="1.2" height="2"/><rect x="-0.6" y="0.8" width="1.2" height="2"/><rect x="6.2" y="0.8" width="1.2" height="2"/><rect x="-8.3" y="2.8" width="4.8" height="3"/><rect x="-2.4" y="2.8" width="4.8" height="3"/><rect x="3.6" y="2.8" width="4.8" height="3"/></g></g>
<g transform="translate(964.5,249.4) scale(1.0)" opacity="1.0"><path d="M-17.5,0.0 L-9.8,-15.8 L9.8,-15.8 L17.5,0.0 L9.8,15.8 L-9.8,15.8 Z" fill="#3f81ef" stroke="#3f81ef" stroke-width="3.4" stroke-linejoin="round"/><path d="M4,-17 L18.5,0 L10,17 L-2,17 Z" fill="#3b7be8" opacity="0.25"/><g fill="#fff"><rect x="-5" y="-6.6" width="10" height="3.6"/><rect x="-0.6" y="-3" width="1.2" height="3"/><rect x="-7" y="-0.2" width="14" height="1.2"/><rect x="-7.4" y="0.8" width="1.2" height="2"/><rect x="-0.6" y="0.8" width="1.2" height="2"/><rect x="6.2" y="0.8" width="1.2" height="2"/><rect x="-8.3" y="2.8" width="4.8" height="3"/><rect x="-2.4" y="2.8" width="4.8" height="3"/><rect x="3.6" y="2.8" width="4.8" height="3"/></g></g>
<g transform="translate(964.5,311.4) scale(1.0)" opacity="1.0"><path d="M-17.5,0.0 L-9.8,-15.8 L9.8,-15.8 L17.5,0.0 L9.8,15.8 L-9.8,15.8 Z" fill="#3f81ef" stroke="#3f81ef" stroke-width="3.4" stroke-linejoin="round"/><path d="M4,-17 L18.5,0 L10,17 L-2,17 Z" fill="#3b7be8" opacity="0.25"/><g fill="#fff"><rect x="-5" y="-6.6" width="10" height="3.6"/><rect x="-0.6" y="-3" width="1.2" height="3"/><rect x="-7" y="-0.2" width="14" height="1.2"/><rect x="-7.4" y="0.8" width="1.2" height="2"/><rect x="-0.6" y="0.8" width="1.2" height="2"/><rect x="6.2" y="0.8" width="1.2" height="2"/><rect x="-8.3" y="2.8" width="4.8" height="3"/><rect x="-2.4" y="2.8" width="4.8" height="3"/><rect x="3.6" y="2.8" width="4.8" height="3"/></g></g>
<g transform="translate(964.5,373.5) scale(1.0)" opacity="1.0"><path d="M-17.5,0.0 L-9.8,-15.8 L9.8,-15.8 L17.5,0.0 L9.8,15.8 L-9.8,15.8 Z" fill="#3f81ef" stroke="#3f81ef" stroke-width="3.4" stroke-linejoin="round"/><path d="M4,-17 L18.5,0 L10,17 L-2,17 Z" fill="#3b7be8" opacity="0.25"/><g fill="#fff"><rect x="-5" y="-6.6" width="10" height="3.6"/><rect x="-0.6" y="-3" width="1.2" height="3"/><rect x="-7" y="-0.2" width="14" height="1.2"/><rect x="-7.4" y="0.8" width="1.2" height="2"/><rect x="-0.6" y="0.8" width="1.2" height="2"/><rect x="6.2" y="0.8" width="1.2" height="2"/><rect x="-8.3" y="2.8" width="4.8" height="3"/><rect x="-2.4" y="2.8" width="4.8" height="3"/><rect x="3.6" y="2.8" width="4.8" height="3"/></g></g>
<g transform="translate(1029.0,249.4) scale(1.0)" opacity="1.0"><path d="M-17.5,0.0 L-9.8,-15.8 L9.8,-15.8 L17.5,0.0 L9.8,15.8 L-9.8,15.8 Z" fill="#3f81ef" stroke="#3f81ef" stroke-width="3.4" stroke-linejoin="round"/><path d="M4,-17 L18.5,0 L10,17 L-2,17 Z" fill="#3b7be8" opacity="0.25"/><g fill="#fff"><rect x="-5" y="-6.6" width="10" height="3.6"/><rect x="-0.6" y="-3" width="1.2" height="3"/><rect x="-7" y="-0.2" width="14" height="1.2"/><rect x="-7.4" y="0.8" width="1.2" height="2"/><rect x="-0.6" y="0.8" width="1.2" height="2"/><rect x="6.2" y="0.8" width="1.2" height="2"/><rect x="-8.3" y="2.8" width="4.8" height="3"/><rect x="-2.4" y="2.8" width="4.8" height="3"/><rect x="3.6" y="2.8" width="4.8" height="3"/></g></g>
<g transform="translate(1029.0,311.4) scale(1.0)" opacity="1.0"><path d="M-17.5,0.0 L-9.8,-15.8 L9.8,-15.8 L17.5,0.0 L9.8,15.8 L-9.8,15.8 Z" fill="#3f81ef" stroke="#3f81ef" stroke-width="3.4" stroke-linejoin="round"/><path d="M4,-17 L18.5,0 L10,17 L-2,17 Z" fill="#3b7be8" opacity="0.25"/><g fill="#fff"><rect x="-5" y="-6.6" width="10" height="3.6"/><rect x="-0.6" y="-3" width="1.2" height="3"/><rect x="-7" y="-0.2" width="14" height="1.2"/><rect x="-7.4" y="0.8" width="1.2" height="2"/><rect x="-0.6" y="0.8" width="1.2" height="2"/><rect x="6.2" y="0.8" width="1.2" height="2"/><rect x="-8.3" y="2.8" width="4.8" height="3"/><rect x="-2.4" y="2.8" width="4.8" height="3"/><rect x="3.6" y="2.8" width="4.8" height="3"/></g></g>
<g transform="translate(1029.0,373.5) scale(1.0)" opacity="1.0"><path d="M-17.5,0.0 L-9.8,-15.8 L9.8,-15.8 L17.5,0.0 L9.8,15.8 L-9.8,15.8 Z" fill="#3f81ef" stroke="#3f81ef" stroke-width="3.4" stroke-linejoin="round"/><path d="M4,-17 L18.5,0 L10,17 L-2,17 Z" fill="#3b7be8" opacity="0.25"/><g fill="#fff"><rect x="-5" y="-6.6" width="10" height="3.6"/><rect x="-0.6" y="-3" width="1.2" height="3"/><rect x="-7" y="-0.2" width="14" height="1.2"/><rect x="-7.4" y="0.8" width="1.2" height="2"/><rect x="-0.6" y="0.8" width="1.2" height="2"/><rect x="6.2" y="0.8" width="1.2" height="2"/><rect x="-8.3" y="2.8" width="4.8" height="3"/><rect x="-2.4" y="2.8" width="4.8" height="3"/><rect x="3.6" y="2.8" width="4.8" height="3"/></g></g>
<g transform="translate(1093.5,249.4) scale(1.0)" opacity="1.0"><path d="M-17.5,0.0 L-9.8,-15.8 L9.8,-15.8 L17.5,0.0 L9.8,15.8 L-9.8,15.8 Z" fill="#3f81ef" stroke="#3f81ef" stroke-width="3.4" stroke-linejoin="round"/><path d="M4,-17 L18.5,0 L10,17 L-2,17 Z" fill="#3b7be8" opacity="0.25"/><g fill="#fff"><rect x="-5" y="-6.6" width="10" height="3.6"/><rect x="-0.6" y="-3" width="1.2" height="3"/><rect x="-7" y="-0.2" width="14" height="1.2"/><rect x="-7.4" y="0.8" width="1.2" height="2"/><rect x="-0.6" y="0.8" width="1.2" height="2"/><rect x="6.2" y="0.8" width="1.2" height="2"/><rect x="-8.3" y="2.8" width="4.8" height="3"/><rect x="-2.4" y="2.8" width="4.8" height="3"/><rect x="3.6" y="2.8" width="4.8" height="3"/></g></g>
<g transform="translate(1093.5,311.4) scale(1.0)" opacity="1.0"><path d="M-17.5,0.0 L-9.8,-15.8 L9.8,-15.8 L17.5,0.0 L9.8,15.8 L-9.8,15.8 Z" fill="#3f81ef" stroke="#3f81ef" stroke-width="3.4" stroke-linejoin="round"/><path d="M4,-17 L18.5,0 L10,17 L-2,17 Z" fill="#3b7be8" opacity="0.25"/><g fill="#fff"><rect x="-5" y="-6.6" width="10" height="3.6"/><rect x="-0.6" y="-3" width="1.2" height="3"/><rect x="-7" y="-0.2" width="14" height="1.2"/><rect x="-7.4" y="0.8" width="1.2" height="2"/><rect x="-0.6" y="0.8" width="1.2" height="2"/><rect x="6.2" y="0.8" width="1.2" height="2"/><rect x="-8.3" y="2.8" width="4.8" height="3"/><rect x="-2.4" y="2.8" width="4.8" height="3"/><rect x="3.6" y="2.8" width="4.8" height="3"/></g></g>
<g transform="translate(1093.5,373.5) scale(1.0)" opacity="1.0"><path d="M-17.5,0.0 L-9.8,-15.8 L9.8,-15.8 L17.5,0.0 L9.8,15.8 L-9.8,15.8 Z" fill="#3f81ef" stroke="#3f81ef" stroke-width="3.4" stroke-linejoin="round"/><path d="M4,-17 L18.5,0 L10,17 L-2,17 Z" fill="#3b7be8" opacity="0.25"/><g fill="#fff"><rect x="-5" y="-6.6" width="10" height="3.6"/><rect x="-0.6" y="-3" width="1.2" height="3"/><rect x="-7" y="-0.2" width="14" height="1.2"/><rect x="-7.4" y="0.8" width="1.2" height="2"/><rect x="-0.6" y="0.8" width="1.2" height="2"/><rect x="6.2" y="0.8" width="1.2" height="2"/><rect x="-8.3" y="2.8" width="4.8" height="3"/><rect x="-2.4" y="2.8" width="4.8" height="3"/><rect x="3.6" y="2.8" width="4.8" height="3"/></g></g>
<g transform="translate(674.5,436) scale(1.0)" opacity="1.0"><path d="M-17.5,0.0 L-9.8,-15.8 L9.8,-15.8 L17.5,0.0 L9.8,15.8 L-9.8,15.8 Z" fill="#3f81ef" stroke="#3f81ef" stroke-width="3.4" stroke-linejoin="round"/><path d="M4,-17 L18.5,0 L10,17 L-2,17 Z" fill="#3b7be8" opacity="0.25"/><g fill="#fff"><rect x="-5" y="-6.6" width="10" height="3.6"/><rect x="-0.6" y="-3" width="1.2" height="3"/><rect x="-7" y="-0.2" width="14" height="1.2"/><rect x="-7.4" y="0.8" width="1.2" height="2"/><rect x="-0.6" y="0.8" width="1.2" height="2"/><rect x="6.2" y="0.8" width="1.2" height="2"/><rect x="-8.3" y="2.8" width="4.8" height="3"/><rect x="-2.4" y="2.8" width="4.8" height="3"/><rect x="3.6" y="2.8" width="4.8" height="3"/></g></g>
<g transform="translate(739,436) scale(1.0)" opacity="1.0"><path d="M-17.5,0.0 L-9.8,-15.8 L9.8,-15.8 L17.5,0.0 L9.8,15.8 L-9.8,15.8 Z" fill="#3f81ef" stroke="#3f81ef" stroke-width="3.4" stroke-linejoin="round"/><path d="M4,-17 L18.5,0 L10,17 L-2,17 Z" fill="#3b7be8" opacity="0.25"/><g fill="#fff"><rect x="-5" y="-6.6" width="10" height="3.6"/><rect x="-0.6" y="-3" width="1.2" height="3"/><rect x="-7" y="-0.2" width="14" height="1.2"/><rect x="-7.4" y="0.8" width="1.2" height="2"/><rect x="-0.6" y="0.8" width="1.2" height="2"/><rect x="6.2" y="0.8" width="1.2" height="2"/><rect x="-8.3" y="2.8" width="4.8" height="3"/><rect x="-2.4" y="2.8" width="4.8" height="3"/><rect x="3.6" y="2.8" width="4.8" height="3"/></g></g>
<g transform="translate(803,436) scale(1.0)" opacity="1.0"><path d="M-17.5,0.0 L-9.8,-15.8 L9.8,-15.8 L17.5,0.0 L9.8,15.8 L-9.8,15.8 Z" fill="#3f81ef" stroke="#3f81ef" stroke-width="3.4" stroke-linejoin="round"/><path d="M4,-17 L18.5,0 L10,17 L-2,17 Z" fill="#3b7be8" opacity="0.25"/><g fill="#fff"><rect x="-5" y="-6.6" width="10" height="3.6"/><rect x="-0.6" y="-3" width="1.2" height="3"/><rect x="-7" y="-0.2" width="14" height="1.2"/><rect x="-7.4" y="0.8" width="1.2" height="2"/><rect x="-0.6" y="0.8" width="1.2" height="2"/><rect x="6.2" y="0.8" width="1.2" height="2"/><rect x="-8.3" y="2.8" width="4.8" height="3"/><rect x="-2.4" y="2.8" width="4.8" height="3"/><rect x="3.6" y="2.8" width="4.8" height="3"/></g></g>
<g transform="translate(641.6,516.2) scale(1.0)" opacity="1.0"><path d="M-17.5,0.0 L-9.8,-15.8 L9.8,-15.8 L17.5,0.0 L9.8,15.8 L-9.8,15.8 Z" fill="#3f81ef" stroke="#3f81ef" stroke-width="3.4" stroke-linejoin="round"/><path d="M4,-17 L18.5,0 L10,17 L-2,17 Z" fill="#3b7be8" opacity="0.25"/><g fill="none" stroke="#fff" stroke-width="1.3"><rect x="-5.5" y="-5.5" width="11" height="11"/></g><rect x="-2.8" y="-2.8" width="5.6" height="5.6" fill="#fff"/><g stroke="#fff" stroke-width="1"><path d="M-3,-6 V-8.5 M0,-6 V-8.5 M3,-6 V-8.5 M-3,6 V8.5 M0,6 V8.5 M3,6 V8.5 M-6,-3 H-8.5 M-6,0 H-8.5 M-6,3 H-8.5 M6,-3 H8.5 M6,0 H8.5 M6,3 H8.5"/></g></g>
<g transform="translate(706.2,516.2) scale(1.0)" opacity="1.0"><path d="M-17.5,0.0 L-9.8,-15.8 L9.8,-15.8 L17.5,0.0 L9.8,15.8 L-9.8,15.8 Z" fill="#3f81ef" stroke="#3f81ef" stroke-width="3.4" stroke-linejoin="round"/><path d="M4,-17 L18.5,0 L10,17 L-2,17 Z" fill="#3b7be8" opacity="0.25"/><g fill="none" stroke="#fff" stroke-width="1.3"><rect x="-5.5" y="-5.5" width="11" height="11"/></g><rect x="-2.8" y="-2.8" width="5.6" height="5.6" fill="#fff"/><g stroke="#fff" stroke-width="1"><path d="M-3,-6 V-8.5 M0,-6 V-8.5 M3,-6 V-8.5 M-3,6 V8.5 M0,6 V8.5 M3,6 V8.5 M-6,-3 H-8.5 M-6,0 H-8.5 M-6,3 H-8.5 M6,-3 H8.5 M6,0 H8.5 M6,3 H8.5"/></g></g>
<g transform="translate(770.8,516.2) scale(1.0)" opacity="1.0"><path d="M-17.5,0.0 L-9.8,-15.8 L9.8,-15.8 L17.5,0.0 L9.8,15.8 L-9.8,15.8 Z" fill="#3f81ef" stroke="#3f81ef" stroke-width="3.4" stroke-linejoin="round"/><path d="M4,-17 L18.5,0 L10,17 L-2,17 Z" fill="#3b7be8" opacity="0.25"/><g fill="none" stroke="#fff" stroke-width="1.3"><rect x="-5.5" y="-5.5" width="11" height="11"/></g><rect x="-2.8" y="-2.8" width="5.6" height="5.6" fill="#fff"/><g stroke="#fff" stroke-width="1"><path d="M-3,-6 V-8.5 M0,-6 V-8.5 M3,-6 V-8.5 M-3,6 V8.5 M0,6 V8.5 M3,6 V8.5 M-6,-3 H-8.5 M-6,0 H-8.5 M-6,3 H-8.5 M6,-3 H8.5 M6,0 H8.5 M6,3 H8.5"/></g></g>
<g transform="translate(835,516.2) scale(1.0)" opacity="0.4"><path d="M-17.5,0.0 L-9.8,-15.8 L9.8,-15.8 L17.5,0.0 L9.8,15.8 L-9.8,15.8 Z" fill="#3f81ef" stroke="#3f81ef" stroke-width="3.4" stroke-linejoin="round"/><path d="M4,-17 L18.5,0 L10,17 L-2,17 Z" fill="#3b7be8" opacity="0.25"/><g fill="none" stroke="#fff" stroke-width="1.3"><rect x="-5.5" y="-5.5" width="11" height="11"/></g><rect x="-2.8" y="-2.8" width="5.6" height="5.6" fill="#fff"/><g stroke="#fff" stroke-width="1"><path d="M-3,-6 V-8.5 M0,-6 V-8.5 M3,-6 V-8.5 M-3,6 V8.5 M0,6 V8.5 M3,6 V8.5 M-6,-3 H-8.5 M-6,0 H-8.5 M-6,3 H-8.5 M6,-3 H8.5 M6,0 H8.5 M6,3 H8.5"/></g></g>
<g transform="translate(641.6,578.6) scale(1.0)" opacity="1.0"><path d="M-17.5,0.0 L-9.8,-15.8 L9.8,-15.8 L17.5,0.0 L9.8,15.8 L-9.8,15.8 Z" fill="#3f81ef" stroke="#3f81ef" stroke-width="3.4" stroke-linejoin="round"/><path d="M4,-17 L18.5,0 L10,17 L-2,17 Z" fill="#3b7be8" opacity="0.25"/><g fill="none" stroke="#fff" stroke-width="1.3"><rect x="-5.5" y="-5.5" width="11" height="11"/></g><rect x="-2.8" y="-2.8" width="5.6" height="5.6" fill="#fff"/><g stroke="#fff" stroke-width="1"><path d="M-3,-6 V-8.5 M0,-6 V-8.5 M3,-6 V-8.5 M-3,6 V8.5 M0,6 V8.5 M3,6 V8.5 M-6,-3 H-8.5 M-6,0 H-8.5 M-6,3 H-8.5 M6,-3 H8.5 M6,0 H8.5 M6,3 H8.5"/></g></g>
<g transform="translate(706.2,578.6) scale(1.0)" opacity="0.4"><path d="M-17.5,0.0 L-9.8,-15.8 L9.8,-15.8 L17.5,0.0 L9.8,15.8 L-9.8,15.8 Z" fill="#3f81ef" stroke="#3f81ef" stroke-width="3.4" stroke-linejoin="round"/><path d="M4,-17 L18.5,0 L10,17 L-2,17 Z" fill="#3b7be8" opacity="0.25"/><g fill="none" stroke="#fff" stroke-width="1.3"><rect x="-5.5" y="-5.5" width="11" height="11"/></g><rect x="-2.8" y="-2.8" width="5.6" height="5.6" fill="#fff"/><g stroke="#fff" stroke-width="1"><path d="M-3,-6 V-8.5 M0,-6 V-8.5 M3,-6 V-8.5 M-3,6 V8.5 M0,6 V8.5 M3,6 V8.5 M-6,-3 H-8.5 M-6,0 H-8.5 M-6,3 H-8.5 M6,-3 H8.5 M6,0 H8.5 M6,3 H8.5"/></g></g>
<g transform="translate(770.6,578.5) scale(1.15)" opacity="1.0"><path d="M-19.0,0.0 L-10.5,-17.5 L10.5,-17.5 L19.0,0.0 L10.5,17.5 L-10.5,17.5 Z" fill="#4285f4" opacity="0.35" stroke="#4285f4" stroke-width="3" stroke-linejoin="round" filter="url(#blur)"/><path d="M-17.5,0.0 L-9.8,-15.8 L9.8,-15.8 L17.5,0.0 L9.8,15.8 L-9.8,15.8 Z" fill="#3f81ef" stroke="#3f81ef" stroke-width="3.4" stroke-linejoin="round"/><path d="M4,-17 L18.5,0 L10,17 L-2,17 Z" fill="#3b7be8" opacity="0.25"/><g fill="none" stroke="#fff" stroke-width="1.3"><rect x="-5.5" y="-5.5" width="11" height="11"/></g><rect x="-2.8" y="-2.8" width="5.6" height="5.6" fill="#fff"/><g stroke="#fff" stroke-width="1"><path d="M-3,-6 V-8.5 M0,-6 V-8.5 M3,-6 V-8.5 M-3,6 V8.5 M0,6 V8.5 M3,6 V8.5 M-6,-3 H-8.5 M-6,0 H-8.5 M-6,3 H-8.5 M6,-3 H8.5 M6,0 H8.5 M6,3 H8.5"/></g></g>
<g transform="translate(356.5,516.2) scale(1.0)" opacity="1.0"><path d="M-17.5,0.0 L-9.8,-15.8 L9.8,-15.8 L17.5,0.0 L9.8,15.8 L-9.8,15.8 Z" fill="#3f81ef" stroke="#3f81ef" stroke-width="3.4" stroke-linejoin="round"/><path d="M4,-17 L18.5,0 L10,17 L-2,17 Z" fill="#3b7be8" opacity="0.25"/><g fill="none" stroke="#fff" stroke-width="1.4"><path d="M-2.4,-8.7 Q5,0 -2.4,9.2"/><path d="M-6,-4.8 H-1.2 M-6,5.3 H-1.2 M-8.8,0.3 H1.2 M3.6,0.3 H6.5"/></g><g fill="#fff"><path d="M-8.3,-4.8 L-5.6,-6.9 L-5.6,-2.7 Z"/><path d="M-8.3,5.3 L-5.6,3.2 L-5.6,7.4 Z"/><path d="M9,0.3 L6.2,-1.8 L6.2,2.4 Z"/></g></g>
<g transform="translate(356.5,714.4) scale(1.0)" opacity="1.0"><path d="M-17.5,0.0 L-9.8,-15.8 L9.8,-15.8 L17.5,0.0 L9.8,15.8 L-9.8,15.8 Z" fill="#3f81ef" stroke="#3f81ef" stroke-width="3.4" stroke-linejoin="round"/><path d="M4,-17 L18.5,0 L10,17 L-2,17 Z" fill="#3b7be8" opacity="0.25"/><g fill="none" stroke="#fff" stroke-width="1.4"><path d="M-2.4,-8.7 Q5,0 -2.4,9.2"/><path d="M-6,-4.8 H-1.2 M-6,5.3 H-1.2 M-8.8,0.3 H1.2 M3.6,0.3 H6.5"/></g><g fill="#fff"><path d="M-8.3,-4.8 L-5.6,-6.9 L-5.6,-2.7 Z"/><path d="M-8.3,5.3 L-5.6,3.2 L-5.6,7.4 Z"/><path d="M9,0.3 L6.2,-1.8 L6.2,2.4 Z"/></g></g>
<g transform="translate(356.5,850) scale(1.0)" opacity="1.0"><path d="M-17.5,0.0 L-9.8,-15.8 L9.8,-15.8 L17.5,0.0 L9.8,15.8 L-9.8,15.8 Z" fill="#3f81ef" stroke="#3f81ef" stroke-width="3.4" stroke-linejoin="round"/><path d="M4,-17 L18.5,0 L10,17 L-2,17 Z" fill="#3b7be8" opacity="0.25"/><g fill="none" stroke="#fff" stroke-width="1.4"><path d="M-2.4,-8.7 Q5,0 -2.4,9.2"/><path d="M-6,-4.8 H-1.2 M-6,5.3 H-1.2 M-8.8,0.3 H1.2 M3.6,0.3 H6.5"/></g><g fill="#fff"><path d="M-8.3,-4.8 L-5.6,-6.9 L-5.6,-2.7 Z"/><path d="M-8.3,5.3 L-5.6,3.2 L-5.6,7.4 Z"/><path d="M9,0.3 L6.2,-1.8 L6.2,2.4 Z"/></g></g>
</svg>
<!-- DIAGRAM END -->
<!-- right panel -->
<div class="abs" style="left:1243px;top:112px;width:7px;height:779px;background:#e2e2e2"></div>
<div class="abs" style="left:1243px;top:395px;width:6px;height:152px;background:#4a4070"></div>
<div class="abs" style="left:1250px;top:112px;width:345px;height:46px;background:#efefef"></div>
<div class="abs" style="left:1250px;top:112px;width:105px;height:46px;background:#fafafa"></div>
<div class="abs" style="left:1355px;top:113px;width:95px;height:45.5px;background:#cbcbcb"></div>
<div class="t" style="left:1265.5px;top:127px;font-size:17px;color:#1d3a5c">Attributes</div>
<div class="t" style="left:1370.5px;top:127px;font-size:16.5px;color:#1d3a5c">Versions</div>
<div class="abs" style="left:1589px;top:158px;width:11px;height:343px;background:#4a4070"></div>
<div class="abs" style="left:1589px;top:501px;width:6px;height:390px;background:#e2e2e2"></div>
<div class="abs" style="left:1595px;top:0;width:5px;height:891px;background:#4a4070"></div>
<svg class="abs" style="left:1261px;top:172px" width="26" height="24"><path d="M7,1.5 H18 L24,12 L18,22.5 H7 L1,12 Z" fill="#4285f4" stroke="#4285f4" stroke-width="1.5" stroke-linejoin="round"/><path d="M10.7,7.8 H14.8 L16.9,11.8 L14.8,15.8 H10.7 L8.6,11.8 Z" fill="#4a5fa8" stroke="#c5d8fb" stroke-width="1.4" stroke-linejoin="round"/><rect x="11.6" y="10.6" width="2.4" height="2.4" fill="#fff"/></svg>
<div class="t" style="left:1297px;top:174px;font-size:15px;font-weight:bold;color:#111">INSTANCE</div>
<div class="abs" style="left:1554px;top:171.5px;width:23.5px;height:23.5px;border-radius:50%;background:#a6d9b9"></div>
<div class="t" style="left:1261px;top:206.5px;font-size:23px;color:#333">instance-</div>
<svg class="abs" style="left:1355px;top:203px" width="102" height="27">
 <rect x="0" y="0" width="102" height="27" fill="#dcdcdc"/>
 <rect x="0" y="0" width="35" height="8" fill="#ececec"/><rect x="58" y="0" width="25" height="8" fill="#e6e6e6"/>
 <rect x="0" y="8" width="14" height="10" fill="#c6c6c6"/><rect x="45" y="8" width="12" height="10" fill="#c2c2c2"/><rect x="62" y="8" width="10" height="10" fill="#b8b8b8"/><rect x="90" y="8" width="12" height="10" fill="#c0c0c0"/>
 <rect x="0" y="18" width="102" height="9" fill="#e4e4e4"/>
</svg>
<div class="t" style="left:1457px;top:206.5px;font-size:23px;color:#333">9d50</div>
<div class="t" style="left:1261.5px;top:240px;font-size:13px;color:#222">4478718</div>
<svg class="abs" style="left:1314px;top:236px" width="88" height="16">
 <rect x="0" y="0" width="88" height="16" fill="#f0f0f0"/>
 <rect x="0" y="6" width="84" height="8" fill="#b4b4b4"/><rect x="10" y="6" width="20" height="8" fill="#a6a6a6"/><rect x="52" y="6" width="22" height="8" fill="#a8a8a8"/>
</svg>
<div class="t" style="left:1262px;top:262px;font-size:12px;font-weight:bold;color:#1a1a1a">us-central1</div>
<div class="t" style="left:1522px;top:240px;font-size:29px;color:#111">$0</div>
<div class="t" style="left:1558px;top:253px;font-size:14px;color:#111">/m</div>
<div class="t" style="left:1262px;top:298px;font-size:12px;font-weight:bold;color:#1a1a1a">Project</div>
<div class="t" style="left:1262px;top:320px;font-size:12px;color:#222">saas-managedzone-</div>
<svg class="abs" style="left:1376px;top:315px" width="86" height="19">
 <rect x="0" y="0" width="86" height="19" fill="#e2e2e2"/>
 <rect x="0" y="0" width="20" height="9" fill="#ececec"/><rect x="20" y="0" width="18" height="9" fill="#cfcfcf"/><rect x="60" y="0" width="20" height="9" fill="#d2d2d2"/>
 <rect x="0" y="9" width="86" height="10" fill="#d6d6d6"/><rect x="80" y="0" width="6" height="19" fill="#f2f2f2"/>
</svg>
<div class="row" style="top:355px"><b>Status</b><span class="val" style="left:141px">RUNNING</span></div>
<div class="row" style="top:377px"><b>CPU Platform</b><span class="val" style="left:141px">Intel Cascade Lake</span></div>
<div class="row" style="top:398px"><b>Zone</b><span class="val" style="left:141px">us-central1-a</span></div>
<div class="row" style="top:420px"><b>Machine Type</b><span class="val" style="left:141px">n2-standard-4</span></div>
<div class="row" style="top:463px"><b>Creation Timestamp</b></div>
<div class="row" style="top:484.5px">2023-03-04 15:43:38</div>
<div class="row" style="top:506px"><b>Shielded Instance Integrity Policy</b></div>
<div class="row" style="top:527.5px"><span style="display:inline-block;width:19px;color:#333">&#8735;</span>Update Auto Learn Policy: <span style="color:#3aa366">&#10003;</span></div>
<div class="row" style="top:549px"><b>Shielded Instance Config</b></div>
<div class="row" style="top:570.5px"><span style="display:inline-block;width:19px;color:#333">&#8735;</span>VTPM: <span style="color:#e04a3a;font-weight:bold">&#10005;</span></div>
<div class="row" style="top:592px"><span style="display:inline-block;width:19px;color:#333">&#8735;</span>Secure Boot: <span style="color:#e04a3a;font-weight:bold">&#10005;</span></div>
<div class="row" style="top:613.5px"><span style="display:inline-block;width:19px;color:#333">&#8735;</span>Integrity Monitoring: <span style="color:#3aa366">&#10003;</span></div>
<div class="row" style="top:643px"><b>Scheduling</b></div>
<div class="row" style="top:664px;left:1270px"><span style="display:inline-block;width:19px;color:#333">&#8735;</span>Host Maintenance: MIGRATE</div>
<div class="row" style="top:685.5px;left:1270px"><span style="display:inline-block;width:19px;color:#333">&#8735;</span>Automatic Restart: true</div>
<div class="t" style="left:1262px;top:723.5px;font-size:17.5px;color:#555">Network Tags</div>
<div class="row" style="top:755.5px">gke-managedzone-</div>
<svg class="abs" style="left:1399px;top:753px" width="180" height="19">
 <rect x="0" y="0" width="180" height="19" fill="#e6e6e6"/>
 <rect x="0" y="0" width="180" height="5" fill="#f0f0f0"/>
 <rect x="20" y="5" width="65" height="9" fill="#bdbdbd"/><rect x="35" y="5" width="18" height="9" fill="#a9a9a9"/><rect x="100" y="5" width="30" height="9" fill="#c8c8c8"/><rect x="140" y="5" width="30" height="9" fill="#b5b5b5"/><rect x="165" y="5" width="10" height="9" fill="#9e9e9e"/>
</svg>
<div class="row" style="top:777px">-node</div>
<div class="t" style="left:1262px;top:814.5px;font-size:17.5px;color:#555">Network Interfaces</div>
<div class="row" style="top:856px;left:1270px"><b>Name</b><span class="val" style="left:138px">nic0</span></div>
<div class="row" style="top:877px;left:1270px"><b>Network IP</b><span class="val" style="left:138px">10.0.0.6</span></div>

<!-- sidebar -->
<div class="abs" style="left:0;top:0;width:1px;height:891px;background:#1a1a1a"></div><div class="abs" style="left:1px;top:0;width:1px;height:891px;background:#555"></div>
<svg class="abs" style="left:0;top:880px" width="12" height="11"><path d="M0,0 V11 H9 A8,8 0 0 1 1.5,3 Z" fill="#6e2035"/><path d="M1.5,0 V3 A8,8 0 0 0 9,11" fill="none" stroke="#6a6a6a" stroke-width="1"/></svg>
<div class="abs" style="left:1px;top:67px;width:6px;height:56px;background:#b05a85"></div>
<svg class="abs" style="left:16px;top:79px" width="30" height="33">
 <path d="M3,6 V30 H22" fill="none" stroke="#a8557e" stroke-width="2.2" stroke-linejoin="round"/>
 <path d="M6,2 H20 L27,9 V28 H6 Z" fill="#a8557e"/>
 <path d="M20,2 V9 H27" fill="#c47aa0"/>
 <g fill="#3a2a33"><rect x="15" y="10" width="3" height="3"/><rect x="9" y="20" width="3.2" height="3.2"/><rect x="15" y="20" width="3.2" height="3.2"/><rect x="21" y="20" width="3.2" height="3.2"/></g>
 <path d="M16.5,13 V20 M10.6,20 V17 H22.6 V20" fill="none" stroke="#3a2a33" stroke-width="1"/>
</svg>
<svg class="abs" style="left:17px;top:137px" width="28" height="20"><path d="M6,18.5 A5.5,5.5 0 0 1 5.5,7.5 A8,8 0 0 1 20.5,6.5 A6,6 0 0 1 21.5,18.5 Z" fill="#fff"/></svg>
<svg class="abs" style="left:20px;top:187px" width="22" height="22"><rect x="1" y="1" width="19" height="19" rx="2" fill="#fff"/><g fill="#363636"><rect x="5" y="9" width="2.4" height="8"/><rect x="9.5" y="5" width="2.4" height="12"/><rect x="14" y="11.5" width="2.4" height="5.5"/></g></svg>
<svg class="abs" style="left:19px;top:239px" width="24" height="24"><path d="M12,3 C7.5,3 6,6.5 6,10 V15 L4,18 H20 L18,15 V10 C18,6.5 16.5,3 12,3 Z" fill="#fff"/><circle cx="12" cy="20" r="2" fill="#fff"/><path d="M4.5,4 A9,9 0 0 0 1.5,11 M19.5,4 A9,9 0 0 1 22.5,11" fill="none" stroke="#fff" stroke-width="1.8"/></svg>
<svg class="abs" style="left:26px;top:853px" width="10" height="12"><path d="M2,1 L8,6 L2,11 Z" fill="#ddd"/></svg>
<!-- zoom controls -->
<div class="zc" style="top:128.5px"><svg class="abs" style="left:11px;top:11px" width="16" height="16"><path d="M8,2 V14 M2,8 H14" stroke="#9a9a9a" stroke-width="1.6"/></svg></div>
<div class="zc" style="top:183.5px;background:#0b375c"><svg class="abs" style="left:11px;top:11px" width="16" height="16"><path d="M4.5,8 H11.5" stroke="#9aa8b8" stroke-width="1.8"/></svg></div>
<div class="zc" style="top:238.5px"><svg class="abs" style="left:10px;top:10px" width="18" height="18"><path d="M3,4 L9,1.5 L15,4 V15.5 L9,12.5 L3,15.5 Z" fill="none" stroke="#9a9a9a" stroke-width="1.3"/><path d="M5,8.5 H13 M6.5,7 L5,8.5 L6.5,10 M11.5,7 L13,8.5 L11.5,10" fill="none" stroke="#9a9a9a" stroke-width="1.2"/></svg></div>
<div class="zc" style="top:294px"><svg class="abs" style="left:11px;top:11px" width="16" height="16"><rect x="2" y="2" width="12" height="12" fill="none" stroke="#9a9a9a" stroke-width="1.3"/><circle cx="8" cy="8" r="2.5" fill="#9a9a9a"/></svg></div>

<!-- subheader -->
<div class="t" style="left:79.5px;top:80.5px;font-size:16.5px;font-weight:bold;color:#fff">managed:</div>
<svg class="abs" style="left:157px;top:79px" width="166" height="19">
 <rect x="0" y="0" width="162" height="18" fill="#8c8c8c"/>
 <rect x="0" y="0" width="38" height="9" fill="#7a7a7a"/>
 <rect x="38" y="0" width="10" height="18" fill="#6a6a6a"/>
 <rect x="48" y="0" width="26" height="9" fill="#747474"/>
 <rect x="74" y="0" width="18" height="9" fill="#9c9c9c"/>
 <rect x="92" y="0" width="18" height="9" fill="#7a7a7a"/>
 <rect x="110" y="0" width="10" height="9" fill="#a0a0a0"/>
 <rect x="120" y="0" width="10" height="9" fill="#6e6e6e"/>
 <rect x="130" y="0" width="32" height="9" fill="#959595"/>
 <rect x="0" y="9" width="38" height="9" fill="#9a9a9a"/>
 <rect x="48" y="9" width="114" height="9" fill="#a0a0a0"/>
 <rect x="0" y="18" width="162" height="1" fill="#2a2a2a"/>
</svg>
<div class="btn" style="left:1245px;width:87px"><svg class="abs" style="left:18px;top:11px" width="12" height="12"><circle cx="9.5" cy="2" r="1.6" fill="#fff"/><circle cx="2.2" cy="6" r="1.6" fill="#fff"/><circle cx="9.5" cy="10" r="1.6" fill="#fff"/><path d="M9.5,2 L2.2,6 L9.5,10" fill="none" stroke="#fff" stroke-width="1.1"/></svg><span style="left:36px">SHARE</span></div>
<div class="btn" style="left:1348px;width:93px"><svg class="abs" style="left:16px;top:11px" width="14" height="10"><path d="M3.5,9 A3,3 0 0 1 3,3.5 A4,4 0 0 1 10.5,3 A3,3 0 0 1 11,9 Z" fill="#fff"/><path d="M7,3.5 V7.5 M5.3,6 L7,7.8 L8.7,6" stroke="#0b375c" stroke-width="1" fill="none"/></svg><span style="left:35px">EXPORT</span></div>
<div class="btn" style="left:1458px;width:129px"><svg class="abs" style="left:16px;top:10px" width="12" height="12"><g transform="translate(6,6)" fill="#fff"><circle r="4"/><g id="tooth"><rect x="-1.3" y="-5.7" width="2.6" height="2.6"/><rect x="-1.3" y="3.1" width="2.6" height="2.6"/><rect x="-5.7" y="-1.3" width="2.6" height="2.6"/><rect x="3.1" y="-1.3" width="2.6" height="2.6"/></g><g transform="rotate(45)"><rect x="-1.3" y="-5.7" width="2.6" height="2.6"/><rect x="-1.3" y="3.1" width="2.6" height="2.6"/><rect x="-5.7" y="-1.3" width="2.6" height="2.6"/><rect x="3.1" y="-1.3" width="2.6" height="2.6"/></g></g><circle cx="6" cy="6" r="1.6" fill="#0b375c"/></svg><span style="left:35px">VIEW OPTIONS</span></div>

<!-- header content -->
<svg class="abs" style="left:0;top:0" width="140" height="63">
  <path d="M27,20.7 V36.6 A4,4 0 0 0 35,36.6 V31.2 A7.25,7.25 0 0 1 49.5,31.2 V43.7" fill="none" stroke="#fff" stroke-width="6"/>
</svg>
<div class="t" style="left:57px;top:17.5px;font-size:31px;color:#fff;letter-spacing:-0.8px;font-weight:normal;-webkit-text-stroke:0.7px #232323">hava</div>
<div class="t" style="left:163px;top:24px;font-size:16.5px;font-weight:bold;color:#fff">hava demo</div>
<div class="t" style="left:345.5px;top:24.5px;font-size:15.5px;font-weight:bold;color:#fff;letter-spacing:0px">Project: Show All</div>
<svg class="abs" style="left:508px;top:29px" width="10" height="6"><path d="M0.5,0.5 H9.5 L5,5 Z" fill="#fff"/></svg>
<div class="abs" style="left:554px;top:11px;width:419px;height:44px;background:#393941"></div>
<div class="abs" style="left:554px;top:11px;width:43px;height:44px;background:#45454d"></div>
<svg class="abs" style="left:564px;top:21px" width="20" height="20"><circle cx="8.4" cy="8" r="4" fill="none" stroke="#fff" stroke-width="1.8"/><path d="M11.2,11 L15.5,15.2" stroke="#fff" stroke-width="2.2" stroke-linecap="round"/></svg>
<div class="t" style="left:629px;top:24px;font-size:15.3px;color:#9a9aa0">Start typing to create a diagram</div>
<svg class="abs" style="left:984px;top:23px" width="20" height="18"><circle cx="9.5" cy="9" r="6.5" fill="none" stroke="#fff" stroke-width="1.6"/><text x="9.5" y="13" font-size="10" font-weight="bold" fill="#fff" text-anchor="middle" font-family="Liberation Sans">?</text></svg>
<svg class="abs" style="left:1470px;top:20px" width="26" height="26"><circle cx="13" cy="12.5" r="10.5" fill="#fff"/><text x="13" y="18.5" font-size="16" font-weight="bold" fill="#232323" text-anchor="middle" font-family="Liberation Sans">?</text></svg>
<svg class="abs" style="left:1521px;top:27px" width="12" height="10"><path d="M2,3 L6,7 L10,3" fill="none" stroke="#fff" stroke-width="1.6"/></svg>
<svg class="abs" style="left:1536px;top:20px" width="24" height="24"><circle cx="11.5" cy="8" r="4.5" fill="#fff"/><path d="M3,21.5 C3,15.5 6.5,14 11.5,14 C16.5,14 20,15.5 20,21.5 Z" fill="#fff"/></svg>

</body></html>
